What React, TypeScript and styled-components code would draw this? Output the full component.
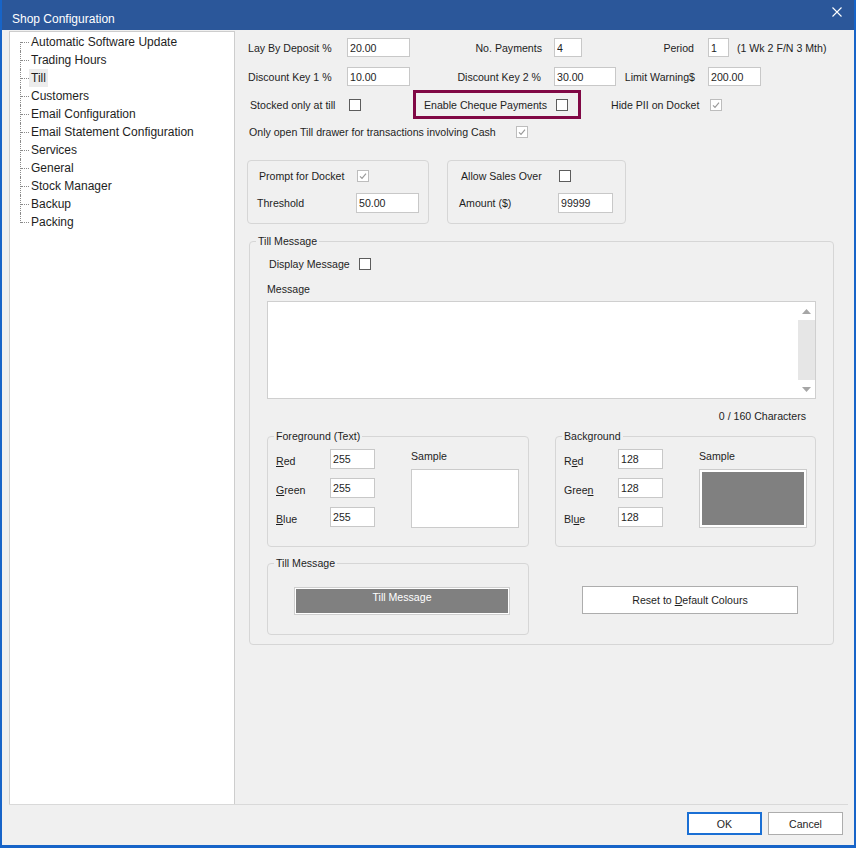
import React from "react"
import styled, { createGlobalStyle } from "styled-components"

const uiFont = `"Liberation Sans", Arial, sans-serif`

const colors = {
  face: "#f0f0f0",
  frame: "#1764c8",
  title: "#2b579a",
  groupLine: "#d6d6d6",
  field: "#c8c8c8",
  text: "#1e1e1e",
  highlight: "#800845",
  swatch: "#808080",
}

const GlobalStyle = createGlobalStyle`
  html, body {
    margin: 0;
    padding: 0;
  }
  *,
  *:before,
  *:after {
    box-sizing: border-box;
  }
  body {
    font-family: ${uiFont};
    background: #ffffff;
  }
`

const Window = styled.div`
  width: 856px;
  height: 848px;
  display: flex;
  flex-direction: column;
  background: ${colors.face};
  border: 2px solid ${colors.frame};
  border-top: 0;
  border-bottom-width: 3px;
  color: ${colors.text};
  overflow: hidden;
`

const TitleBar = styled.div`
  flex: none;
  height: 30px;
  display: flex;
  align-items: flex-start;
  justify-content: space-between;
  padding: 12px 12px 0 10px;
  background: ${colors.title};
  color: #ffffff;
  font-size: 12px;
  line-height: 14px;
`

const CloseIcon = styled.svg`
  margin-top: -5px;
`

const Main = styled.div`
  flex: 1;
  display: flex;
  min-height: 0;
  margin: 1px 6px 0 7px;
  border-bottom: 1px solid #d9d9d9;
`

const Tree = styled.ul`
  flex: none;
  width: 226px;
  margin: 0;
  padding: 1px 0 0 0;
  list-style: none;
  background: #ffffff;
  border: 1px solid #cdcdcd;
  border-bottom: 0;
  font-size: 12px;
`

const TreeItem = styled.li<{ $first?: boolean; $last?: boolean }>`
  position: relative;
  height: 18px;
  line-height: 18px;
  padding-left: 19px;
  white-space: nowrap;

  &::before {
    content: "";
    position: absolute;
    left: 10px;
    top: ${(p) => (p.$first ? "9px" : "0")};
    height: ${(p) => (p.$last ? "10px" : p.$first ? "9px" : "18px")};
    border-left: 1px dotted #8a8a8a;
  }

  &::after {
    content: "";
    position: absolute;
    left: 11px;
    top: 9px;
    width: 8px;
    border-top: 1px dotted #8a8a8a;
  }
`

const TreeText = styled.span<{ $selected?: boolean }>`
  display: inline-block;
  padding: 0 2px;
  background: ${(p) => (p.$selected ? "#ececec" : "transparent")};
`

const Content = styled.div`
  flex: 1;
  min-width: 0;
  padding: 7px 0 0 13px;
  font-size: 10.6px;
`

const Row = styled.div<{ $top?: number; $h?: number; $left?: number }>`
  display: flex;
  align-items: center;
  height: ${(p) => (p.$h ? `${p.$h}px` : "auto")};
  margin-top: ${(p) => p.$top ?? 0}px;
  margin-left: ${(p) => p.$left ?? 0}px;
`

const Label = styled.span<{ $w?: number; $right?: boolean; $pr?: number; $ml?: number; $pt?: number }>`
  flex: none;
  display: inline-block;
  width: ${(p) => (p.$w ? `${p.$w}px` : "auto")};
  text-align: ${(p) => (p.$right ? "right" : "left")};
  padding-right: ${(p) => p.$pr ?? 0}px;
  padding-top: ${(p) => p.$pt ?? 0}px;
  margin-left: ${(p) => p.$ml ?? 0}px;
  line-height: 14px;
  white-space: nowrap;
`

const TextBox = styled.input.attrs({ readOnly: true, type: "text" })<{ $w: number; $h?: number }>`
  flex: none;
  width: ${(p) => p.$w}px;
  height: ${(p) => p.$h ?? 19}px;
  margin: 0;
  padding: 0 2px;
  border: 1px solid ${colors.field};
  background: #ffffff;
  font: inherit;
  color: inherit;
  outline: none;
`

const Box = styled.span<{ $checked?: boolean }>`
  flex: none;
  width: 12px;
  height: 12px;
  display: inline-flex;
  align-items: center;
  justify-content: center;
  background: #ffffff;
  border: 1px solid ${(p) => (p.$checked ? "#bdbdbd" : "#5c5c5c")};
`

const CheckBox = ({ checked }: { checked?: boolean }) => (
  <Box $checked={checked}>
    {checked && (
      <svg width="8" height="8" viewBox="0 0 8 8">
        <path d="M1 4.3 L3 6.3 L7 1.6" fill="none" stroke="#9a9a9a" strokeWidth="1.2" />
      </svg>
    )}
  </Box>
)

const Highlight = styled.div`
  flex: none;
  display: flex;
  align-items: center;
  width: 168px;
  height: 29px;
  margin-left: 52px;
  padding-left: 8px;
  border: 3px solid ${colors.highlight};
`

const GroupBox = styled.div<{ $w: number; $h?: number; $ml?: number; $top?: number; $pl?: number }>`
  flex: none;
  width: ${(p) => p.$w}px;
  height: ${(p) => (p.$h ? `${p.$h}px` : "auto")};
  margin-left: ${(p) => p.$ml ?? 0}px;
  margin-top: ${(p) => p.$top ?? 0}px;
  padding-left: ${(p) => p.$pl ?? 0}px;
  border: 1px solid ${colors.groupLine};
  border-radius: 4px;
`

const Caption = styled.div<{ $left: number }>`
  width: fit-content;
  margin: -7px 0 0 ${(p) => p.$left}px;
  padding: 0 2px;
  line-height: 13px;
  background: ${colors.face};
  white-space: nowrap;
`

const SimpleGroup = styled(GroupBox)`
  padding-top: 7px;
`

const TillGroup = styled(GroupBox)`
  padding: 0 17px 9px 17px;
`

const MessageBox = styled.div`
  display: flex;
  justify-content: flex-end;
  height: 98px;
  margin-top: 5px;
  background: #ffffff;
  border: 1px solid #cfcfcf;
`

const ScrollBar = styled.div`
  width: 17px;
  display: flex;
  flex-direction: column;
`

const ScrollArrow = styled.div`
  height: 18px;
  display: flex;
  align-items: center;
  justify-content: center;
`

const ScrollTrack = styled.div`
  flex: 1;
  background: #e6e6e6;
`

const CharCount = styled.div`
  margin-top: 10px;
  padding-right: 10px;
  line-height: 14px;
  text-align: right;
`

const PairRow = styled.div<{ $top: number }>`
  display: flex;
  align-items: flex-start;
  gap: 26px;
  margin-top: ${(p) => p.$top}px;
`

const ColorBody = styled.div`
  display: flex;
  margin-top: 6px;
  padding-left: 8px;
`

const ChannelList = styled.div`
  display: flex;
  flex-direction: column;
  gap: 9px;
`

const SampleColumn = styled.div`
  display: flex;
  flex-direction: column;
  margin-left: 36px;
`

const Swatch = styled.div<{ $color: string }>`
  width: 108px;
  height: 59px;
  margin-top: 6px;
  background: ${(p) => p.$color};
  border: 1px solid #cbcbcb;
  box-shadow: ${(p) => (p.$color === "#ffffff" ? "none" : "inset 0 0 0 2px #ffffff")};
`

const PreviewBar = styled.div`
  width: 216px;
  height: 28px;
  margin: 17px 0 0 26px;
  padding-top: 2px;
  background: ${colors.swatch};
  border: 1px solid #cfcfcf;
  box-shadow: inset 0 0 0 1px #ffffff;
  color: #ffffff;
  text-align: center;
  line-height: 14px;
`

const Button = styled.button<{ $w: number; $h: number; $primary?: boolean }>`
  flex: none;
  width: ${(p) => p.$w}px;
  height: ${(p) => p.$h}px;
  margin: 0;
  padding: 0;
  background: #ffffff;
  border: 1px solid ${(p) => (p.$primary ? "#1a6fd4" : "#adadad")};
  box-shadow: ${(p) => (p.$primary ? "inset 0 0 0 1px #1a6fd4" : "none")};
  font-family: ${uiFont};
  font-size: 10.6px;
  color: ${colors.text};
`

const ResetButton = styled(Button)`
  margin: 23px 0 0 27px;
`

const Footer = styled.div`
  flex: none;
  height: 40px;
  display: flex;
  justify-content: flex-end;
  align-items: flex-start;
  gap: 6px;
  padding: 7px 11px 0 0;
`

const treeItems = [
  "Automatic Software Update",
  "Trading Hours",
  "Till",
  "Customers",
  "Email Configuration",
  "Email Statement Configuration",
  "Services",
  "General",
  "Stock Manager",
  "Backup",
  "Packing",
]

interface Channel {
  label: React.ReactNode
  value: string
}

const ColourGroup = ({ title, channels, swatch }: { title: string; channels: Channel[]; swatch: string }) => (
  <GroupBox $w={title === "Background" ? 261 : 262} $h={111}>
    <Caption $left={6}>{title}</Caption>
    <ColorBody>
      <ChannelList>
        {channels.map((c, i) => (
          <Row key={i}>
            <Label $w={54} $pt={3}>
              {c.label}
            </Label>
            <TextBox $w={45} $h={20} defaultValue={c.value} />
          </Row>
        ))}
      </ChannelList>
      <SampleColumn>
        <Label>Sample</Label>
        <Swatch $color={swatch} />
      </SampleColumn>
    </ColorBody>
  </GroupBox>
)

const App = () => (
  <Window>
    <GlobalStyle />
    <TitleBar>
      <span>Shop Configuration</span>
      <CloseIcon width="10" height="10" viewBox="0 0 10 10">
        <path d="M0.5 0.5 L9.5 9.5 M9.5 0.5 L0.5 9.5" stroke="#ffffff" strokeWidth="1.1" />
      </CloseIcon>
    </TitleBar>
    <Main>
      <Tree>
        {treeItems.map((name, i) => (
          <TreeItem key={name} $first={i === 0} $last={i === treeItems.length - 1}>
            <TreeText $selected={name === "Till"}>{name}</TreeText>
          </TreeItem>
        ))}
      </Tree>
      <Content>
        <Row $h={19}>
          <Label $w={99}>Lay By Deposit %</Label>
          <TextBox $w={63} defaultValue="20.00" />
          <Label $w={144} $right $pr={12}>
            No. Payments
          </Label>
          <TextBox $w={28} defaultValue="4" />
          <Label $w={126} $right $pr={14}>
            Period
          </Label>
          <TextBox $w={21} defaultValue="1" />
          <Label $ml={8}>(1 Wk 2 F/N 3 Mth)</Label>
        </Row>
        <Row $h={19} $top={10}>
          <Label $w={99}>Discount Key 1 %</Label>
          <TextBox $w={63} defaultValue="10.00" />
          <Label $w={144} $right $pr={13}>
            Discount Key 2 %
          </Label>
          <TextBox $w={62} defaultValue="30.00" />
          <Label $w={92} $right $pr={13}>
            Limit Warning$
          </Label>
          <TextBox $w={53} defaultValue="200.00" />
        </Row>
        <Row $h={29} $top={4}>
          <Label $w={99} $ml={2}>
            Stocked only at till
          </Label>
          <CheckBox />
          <Highlight>
            <Label $w={132}>Enable Cheque Payments</Label>
            <CheckBox />
          </Highlight>
          <Label $w={99} $ml={30}>
            Hide PII on Docket
          </Label>
          <CheckBox checked />
        </Row>
        <Row $h={16} $top={5}>
          <Label $w={267} $ml={1}>
            Only open Till drawer for transactions involving Cash
          </Label>
          <CheckBox checked />
        </Row>
        <Row $top={20}>
          <SimpleGroup $w={182} $h={64} $ml={-1} $pl={9}>
            <Row $h={16} $left={2}>
              <Label $w={98}>Prompt for Docket</Label>
              <CheckBox checked />
            </Row>
            <Row $h={20} $top={9}>
              <Label $w={99}>Threshold</Label>
              <TextBox $w={63} $h={20} defaultValue="50.00" />
            </Row>
          </SimpleGroup>
          <SimpleGroup $w={179} $h={64} $ml={18} $pl={11}>
            <Row $h={16} $left={2}>
              <Label $w={98}>Allow Sales Over</Label>
              <CheckBox />
            </Row>
            <Row $h={20} $top={9}>
              <Label $w={99}>Amount ($)</Label>
              <TextBox $w={55} $h={20} defaultValue="99999" />
            </Row>
          </SimpleGroup>
        </Row>
        <TillGroup $w={585} $ml={1} $top={17}>
          <Caption $left={-11}>Till Message</Caption>
          <Row $h={16} $top={8} $left={2}>
            <Label $w={90}>Display Message</Label>
            <CheckBox />
          </Row>
          <Row $h={14} $top={10}>
            <Label>Message</Label>
          </Row>
          <MessageBox>
            <ScrollBar>
              <ScrollArrow>
                <svg width="9" height="5" viewBox="0 0 9 5">
                  <polygon points="0,5 4.5,0 9,5" fill="#a6a6a6" />
                </svg>
              </ScrollArrow>
              <ScrollTrack />
              <ScrollArrow>
                <svg width="9" height="5" viewBox="0 0 9 5">
                  <polygon points="0,0 9,0 4.5,5" fill="#a6a6a6" />
                </svg>
              </ScrollArrow>
            </ScrollBar>
          </MessageBox>
          <CharCount>0 / 160 Characters</CharCount>
          <PairRow $top={13}>
            <ColourGroup
              title="Foreground (Text)"
              swatch="#ffffff"
              channels={[
                { label: <><u>R</u>ed</>, value: "255" },
                { label: <><u>G</u>reen</>, value: "255" },
                { label: <><u>B</u>lue</>, value: "255" },
              ]}
            />
            <ColourGroup
              title="Background"
              swatch={colors.swatch}
              channels={[
                { label: <>R<u>e</u>d</>, value: "128" },
                { label: <>Gree<u>n</u></>, value: "128" },
                { label: <>Bl<u>u</u>e</>, value: "128" },
              ]}
            />
          </PairRow>
          <PairRow $top={16}>
            <GroupBox $w={262} $h={72}>
              <Caption $left={6}>Till Message</Caption>
              <PreviewBar>Till Message</PreviewBar>
            </GroupBox>
            <ResetButton $w={216} $h={28}>
              Reset to <u>D</u>efault Colours
            </ResetButton>
          </PairRow>
        </TillGroup>
      </Content>
    </Main>
    <Footer>
      <Button $w={75} $h={23} $primary>
        OK
      </Button>
      <Button $w={75} $h={23}>
        Cancel
      </Button>
    </Footer>
  </Window>
)

export default App
